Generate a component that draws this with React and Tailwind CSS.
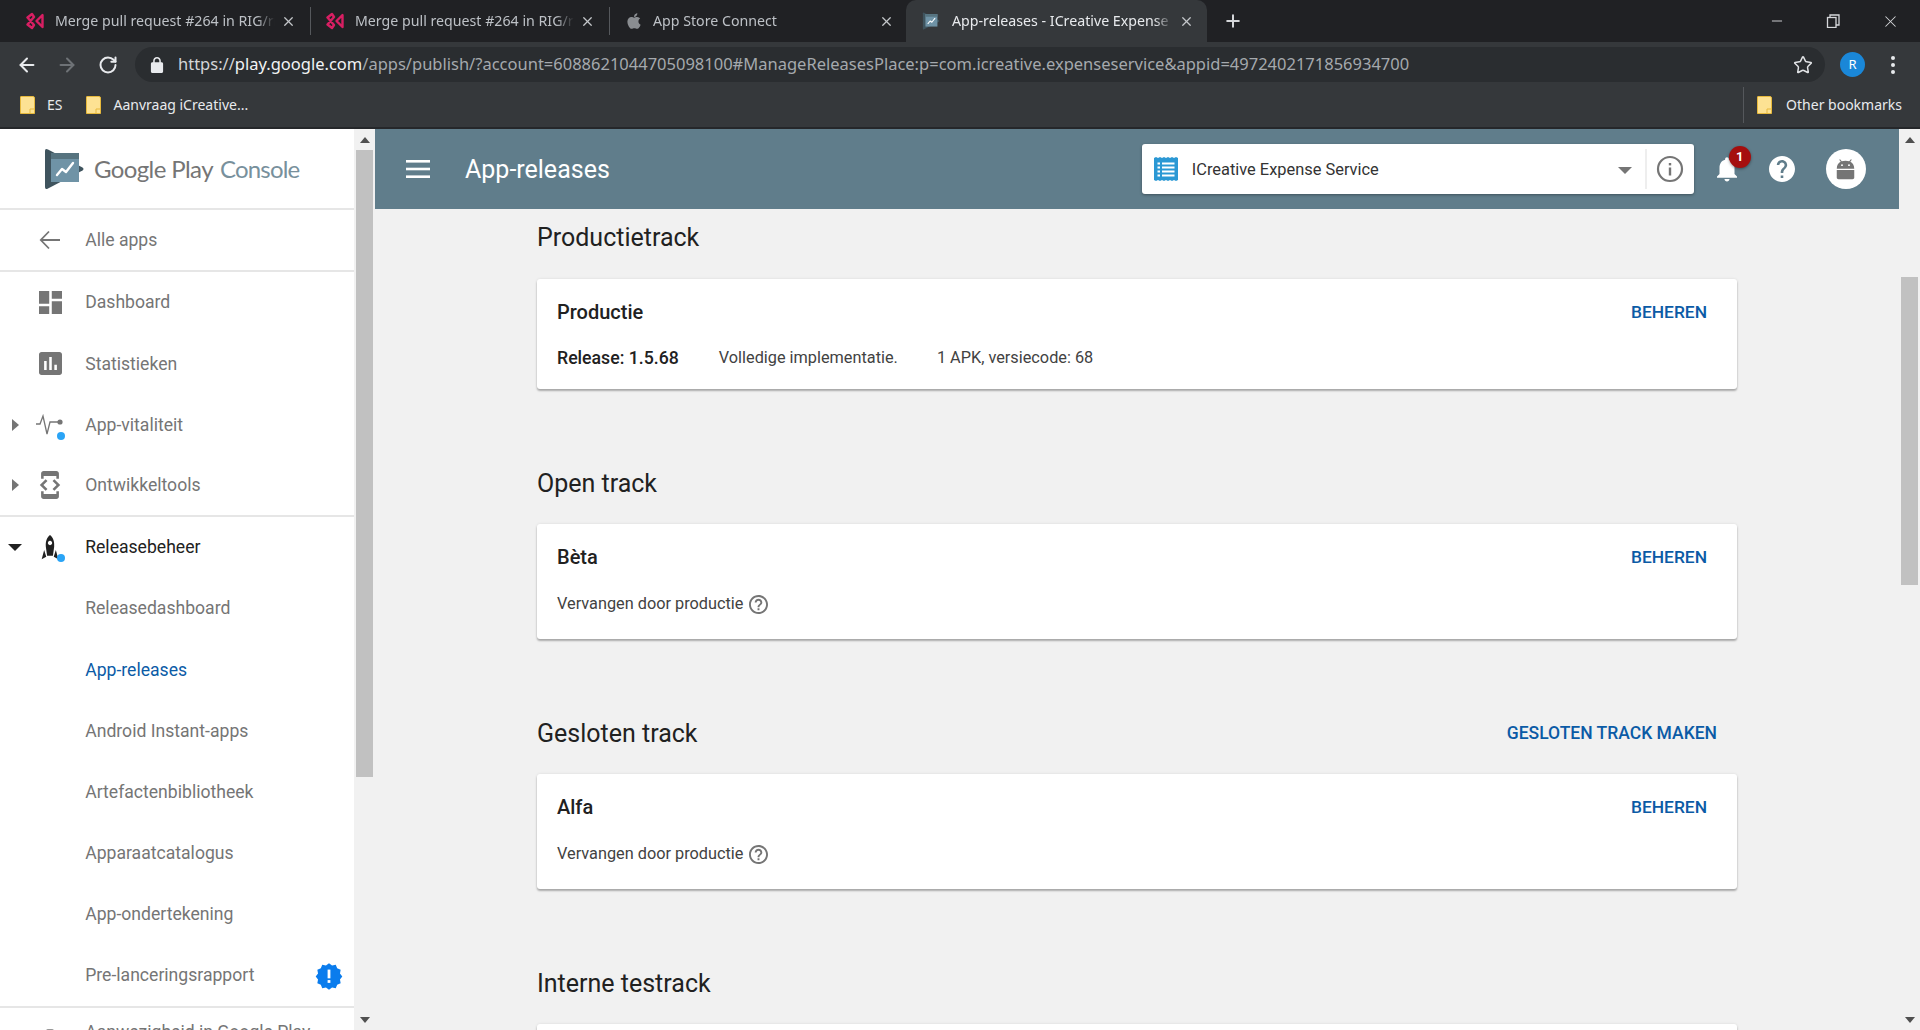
import { ArrowLeft, ArrowRight, RotateCw, Star, X, Plus, Minus } from 'lucide-react'
import { FaApple } from 'react-icons/fa'

const chromeFont = "[font-family:'Noto_Sans',sans-serif]"

function PinkIcon() {
  return (
    <svg width="18" height="18" viewBox="0 0 18 18" fill="none" stroke="#d81f63" strokeWidth="2.4" strokeLinejoin="round" className="shrink-0">
      <path d="M6 2 L1.5 5.5 L8 13 L6 16 L1.5 12.5 L8 5 Z" />
      <path d="M10.5 9 L16.5 3 V15 Z" />
    </svg>
  )
}

function PlayIcon({ className }) {
  return (
    <svg viewBox="0 0 40 42" className={className}>
      <path d="M1 3 Q1 0 4 1.5 L38.5 19.5 Q40.5 21 38.5 22.5 L4 40.5 Q1 42 1 39 Z" fill="#3f545e" />
      <rect x="7" y="5" width="28" height="29" fill="#6f93a6" />
      <rect x="7" y="5" width="28" height="6" fill="#56737f" />
      <path d="M13 27 L18 21 L22 24 L29 15" fill="none" stroke="#fff" strokeWidth="2.4" strokeLinecap="round" strokeLinejoin="round" />
    </svg>
  )
}

function Tab({ width, paddingClass, icon, label, active, closeClass }) {
  return (
    <div
      className={`flex h-[42px] shrink-0 items-center ${paddingClass} ${active ? 'rounded-t-[10px] bg-[#35383b]' : ''}`}
      style={{ width }}
    >
      {icon}
      <span className={`min-w-0 flex-1 overflow-hidden whitespace-nowrap text-[14.2px] ${active ? 'text-[#e8eaed]' : 'text-[#bdc1c6]'} [mask-image:linear-gradient(to_right,black_92%,transparent)]`}>
        {label}
      </span>
      <X size={15} strokeWidth={2} className={`shrink-0 text-[#c4c7ca] ${closeClass}`} />
    </div>
  )
}

function Folder() {
  return (
    <svg width="15" height="18" viewBox="0 0 15 18" className="shrink-0">
      <path d="M0.5 1 Q0.5 0.5 1 0.5 H13 Q14.5 0.5 14.5 2 V17.5 H0.5 Z" fill="#fde293" stroke="#e7b93c" strokeWidth="1" />
      <path d="M10 17 V13 H14" fill="none" stroke="#e7b93c" strokeWidth="1" />
    </svg>
  )
}

function BrowserChrome() {
  return (
    <div className={`shrink-0 ${chromeFont}`}>
      <div className="flex h-[42px] items-center bg-[#202124]">
        <Tab width={310} paddingClass="pl-[26px] pr-[14px]" icon={<PinkIcon />} label={<span className="ml-[11px]">Merge pull request #264 in RIG/rig</span>} closeClass="ml-[6px]" />
        <div className="h-[28px] w-px bg-[#55585c]" />
        <Tab width={298} paddingClass="pl-[15px] pr-[14px]" icon={<PinkIcon />} label={<span className="ml-[11px]">Merge pull request #264 in RIG/rig</span>} closeClass="ml-[6px]" />
        <div className="h-[28px] w-px bg-[#55585c]" />
        <Tab width={296} paddingClass="pl-[15px] pr-[12px]" icon={<FaApple size={18} className="shrink-0 text-[#8a8d91]" />} label={<span className="ml-[10px]">App Store Connect</span>} />
        <Tab width={301} paddingClass="pl-[16px] pr-[13px]" active icon={<PlayIcon className="h-[18px] w-[18px] shrink-0" />} label={<span className="ml-[12px]">App-releases - ICreative Expense Service</span>} closeClass="ml-[6px]" />
        <Plus size={20} strokeWidth={2.4} className="ml-[16px] text-[#d5d7da]" />
        <div className="ml-auto flex items-center pr-[20px] text-[#d5d7da]">
          <Minus size={16} strokeWidth={1.4} />
          <svg width="14" height="14" viewBox="0 0 14 14" fill="none" stroke="currentColor" strokeWidth="1.3" className="ml-[41px]">
            <rect x="1.5" y="3.5" width="8.5" height="10" />
            <path d="M4 3.5 V1 H13 V11 H10" />
          </svg>
          <X size={19} strokeWidth={1.3} className="ml-[41px]" />
        </div>
      </div>

      <div className="flex h-[40px] items-end bg-[#35383b] pl-[16px] pr-[24px]">
        <div className="flex h-[35px] w-full items-center">
          <ArrowLeft size={22} strokeWidth={2.2} className="text-[#e8eaed]" />
          <ArrowRight size={22} strokeWidth={2.2} className="ml-[18px] text-[#6e7276]" />
          <RotateCw size={20} strokeWidth={2.4} className="ml-[20px] text-[#e8eaed]" />
          <div className="ml-[17px] flex h-[35px] w-[1690px] items-center rounded-full bg-[#2a2d30] pl-[15px] pr-[12px]">
            <svg width="14" height="16" viewBox="4 1 16 21" fill="#e8eaed" className="shrink-0">
              <path d="M18 8h-1V6c0-2.76-2.24-5-5-5S7 3.24 7 6v2H6c-1.1 0-2 .9-2 2v10c0 1.1.9 2 2 2h12c1.1 0 2-.9 2-2V10c0-1.1-.9-2-2-2zM9 6c0-1.66 1.34-3 3-3s3 1.34 3 3v2H9V6z" />
            </svg>
            <span className="ml-[14px] whitespace-nowrap text-[16.5px] text-[#a5a9ad]">
              <span className="text-[#d3d5d8]">https://</span>
              <span className="text-[#f1f3f4]">play.google.com</span>
              /apps/publish/?account=6088621044705098100#ManageReleasesPlace:p=com.icreative.expenseservice&amp;appid=4972402171856934700
            </span>
            <Star size={20} strokeWidth={1.8} className="ml-auto text-[#e0e2e5]" />
          </div>
          <div className="ml-[15px] flex h-[25px] w-[25px] items-center justify-center rounded-full bg-[#1a87d8] text-[13px] text-white">R</div>
          <svg width="4" height="18" viewBox="0 0 4 18" fill="#e8eaed" className="ml-[26px]">
            <circle cx="2" cy="2" r="2" />
            <circle cx="2" cy="9" r="2" />
            <circle cx="2" cy="16" r="2" />
          </svg>
        </div>
      </div>

      <div className="flex h-[47px] items-center border-b-2 border-[#25272a] bg-[#35383b] pl-[20px] pr-[18px] text-[14px] text-[#e8eaed]">
        <Folder />
        <span className="ml-[12px]">ES</span>
        <div className="ml-[24px]"><Folder /></div>
        <span className="ml-[12px]">Aanvraag iCreative...</span>
        <div className="ml-auto h-[36px] w-px bg-[#55585c]" />
        <div className="ml-[13px]"><Folder /></div>
        <span className="ml-[14px]">Other bookmarks</span>
      </div>
    </div>
  )
}

const icons = {
  back: (
    <svg width="24" height="24" viewBox="0 0 24 24" fill="none" stroke="#757575" strokeWidth="1.8">
      <path d="M22 12 H3 M11 3.5 L2.8 12 L11 20.5" />
    </svg>
  ),
  dashboard: (
    <svg width="23" height="23" viewBox="3 3 18 18" fill="#757575">
      <path d="M3 13h8V3H3v10zm0 8h8v-6H3v6zm10 0h8V11h-8v10zm0-18v6h8V3h-8z" />
    </svg>
  ),
  stats: (
    <svg width="23" height="23" viewBox="3 3 18 18" fill="#757575">
      <path d="M19 3H5c-1.1 0-2 .9-2 2v14c0 1.1.9 2 2 2h14c1.1 0 2-.9 2-2V5c0-1.1-.9-2-2-2zM9 17H7v-7h2v7zm4 0h-2V7h2v10zm4 0h-2v-4h2v4z" />
    </svg>
  ),
  vitals: (
    <svg width="28" height="22" viewBox="0 0 28 22" fill="none" stroke="#757575" strokeWidth="1.3">
      <path d="M0 10 H4 L7 2 L11 20 L14 8 H23" />
      <circle cx="24" cy="8" r="2.6" fill="#757575" stroke="none" />
    </svg>
  ),
  devtools: (
    <svg width="28" height="28" viewBox="2 1 20 22" fill="#757575">
      <path d="M7 5h10v2h2V3c0-1.1-.9-1.99-2-1.99L7 1c-1.1 0-2 .9-2 2v4h2V5zm8.41 11.59L20 12l-4.59-4.59L14 8.83 17.17 12 14 15.17l1.41 1.42zM10 15.17L6.83 12 10 8.83 8.59 7.41 4 12l4.59 4.59L10 15.17zM17 19H7v-2H5v4c0 1.1.9 2 2 2h10c1.1 0 2-.9 2-2v-4h-2v2z" />
    </svg>
  ),
  rocket: (
    <svg width="20" height="25" viewBox="0 0 24 30" fill="#212121">
      <path fillRule="evenodd" d="M12 0 C8 3 6.5 8 7 14 L8.5 25 H15.5 L17 14 C17.5 8 16 3 12 0Z M12 7 a2.6 2.6 0 1 0 0.01 0Z" />
      <path d="M5 18 L2 29 L7.5 26Z M19 18 L22 29 L16.5 26Z" />
    </svg>
  ),
  store: (
    <svg width="26" height="26" viewBox="0 0 24 24" fill="#757575" className="mt-[17px]">
      <path d="M20 6h-4V4c0-1.1-.9-2-2-2h-4c-1.1 0-2 .9-2 2v2H4c-1.1 0-2 .9-2 2v11c0 1.1.9 2 2 2h16c1.1 0 2-.9 2-2V8c0-1.1-.9-2-2-2zM10 4h4v2h-4V4z" />
    </svg>
  ),
}

function NavRow({ icon, label, caret, dotClass, active, bordered, heightClass = 'h-[61.2px]' }) {
  return (
    <div className={`flex shrink-0 items-center ${heightClass} ${bordered ? 'border-b-2 border-[#e6e6e6]' : ''}`}>
      <div className="flex w-[30px] justify-center">
        {caret === 'right' && <div className="h-0 w-0 border-y-[6px] border-l-[7px] border-y-transparent border-l-[#757575]" />}
        {caret === 'down' && <div className="h-0 w-0 border-x-[7px] border-t-[7px] border-x-transparent border-t-[#212121]" />}
      </div>
      <div className="relative flex w-[40px] justify-center">
        {icon}
        {dotClass && <span className={`absolute right-[5px] h-[8px] w-[8px] rounded-full bg-[#2aa4f6] ${dotClass}`} />}
      </div>
      <span className={`ml-[15.2px] whitespace-nowrap text-[17.6px] ${active ? 'text-[#212121]' : 'text-[#757575]'}`}>{label}</span>
    </div>
  )
}

function SubRow({ label, active, badge }) {
  return (
    <div className="flex h-[61.2px] shrink-0 items-center pl-[85.2px]">
      <span className={`text-[17.6px] ${active ? 'text-[#0b5ba6]' : 'text-[#757575]'}`}>{label}</span>
      {badge && (
        <svg width="28" height="28" viewBox="0 0 24 24" className="ml-auto mr-[11px]">
          <path fill="#0a7ced" d="M12 1l2.6 2 3.2-.6 1.2 3 3 1.2-.6 3.2 2 2.6-2 2.6.6 3.2-3 1.2-1.2 3-3.2-.6-2.6 2-2.6-2-3.2.6-1.2-3-3-1.2.6-3.2-2-2.6 2-2.6-.6-3.2 3-1.2 1.2-3 3.2.6z" />
          <rect x="10.8" y="6.5" width="2.4" height="7.5" fill="#fff" />
          <rect x="10.8" y="15.5" width="2.4" height="2.4" fill="#fff" />
        </svg>
      )}
    </div>
  )
}

function Sidebar() {
  return (
    <div className="flex h-full w-[354px] shrink-0 flex-col overflow-hidden bg-white">
      <div className="flex h-[81px] shrink-0 items-center border-b-2 border-[#e6e6e6] pl-[44px]">
        <PlayIcon className="h-[42px] w-[40px] shrink-0" />
        <span className="ml-[10px] whitespace-nowrap text-[24px] tracking-[-0.6px] text-[#757575] [font-family:Lato,sans-serif]">Google Play</span>
        <span className="ml-[7px] whitespace-nowrap text-[24px] tracking-[-0.8px] text-[#78909c] [font-family:Lato,sans-serif]">Console</span>
      </div>
      <NavRow icon={icons.back} label="Alle apps" bordered heightClass="h-[62px]" />
      <NavRow icon={icons.dashboard} label="Dashboard" />
      <NavRow icon={icons.stats} label="Statistieken" />
      <NavRow icon={icons.vitals} label="App-vitaliteit" caret="right" dotClass="bottom-[-4px]" />
      <NavRow icon={icons.devtools} label="Ontwikkeltools" caret="right" bordered />
      <NavRow icon={icons.rocket} label="Releasebeheer" caret="down" dotClass="bottom-[-2px]" active />
      <SubRow label="Releasedashboard" />
      <SubRow label="App-releases" active />
      <SubRow label="Android Instant-apps" />
      <SubRow label="Artefactenbibliotheek" />
      <SubRow label="Apparaatcatalogus" />
      <SubRow label="App-ondertekening" />
      <div className="shrink-0 border-b-2 border-[#e6e6e6]">
        <SubRow label="Pre-lanceringsrapport" badge />
      </div>
      <NavRow icon={icons.store} label="Aanwezigheid in Google Play" heightClass="h-[47px]" />
    </div>
  )
}

function Scrollbar({ thumbTop, thumbHeight }) {
  return (
    <div className="flex h-full w-[21px] shrink-0 flex-col bg-[#f1f1f1]">
      <div className="flex h-[21px] shrink-0 items-center justify-center">
        <div className="h-0 w-0 border-x-[5px] border-b-[6px] border-x-transparent border-b-[#505050]" />
      </div>
      <div className="ml-[2px] w-[17px] shrink-0 bg-[#c1c1c1]" style={{ marginTop: thumbTop, height: thumbHeight }} />
      <div className="mt-auto flex h-[21px] shrink-0 items-center justify-center">
        <div className="h-0 w-0 border-x-[5px] border-t-[6px] border-x-transparent border-t-[#505050]" />
      </div>
    </div>
  )
}

function Header() {
  return (
    <div className="flex h-[80px] shrink-0 items-center bg-[#607d8b] pl-[31px]">
      <svg width="24" height="18" viewBox="0 0 24 18" fill="#fff">
        <rect y="0" width="24" height="2.6" />
        <rect y="7.7" width="24" height="2.6" />
        <rect y="15.4" width="24" height="2.6" />
      </svg>
      <span className="ml-[35px] mt-px text-[25px] text-white">App-releases</span>

      <div className="ml-[532px] flex h-[50px] w-[552px] items-center rounded-[3px] bg-white pl-[12px] shadow-[0_1px_3px_rgba(0,0,0,0.35)]">
        <svg width="24" height="24" viewBox="0 0 24 24" className="shrink-0">
          <path fill="#2b98d4" d="M0 1 L2 0 L4 1 L6 0 L8 1 L10 0 L12 1 L14 0 L16 1 L18 0 L20 1 L22 0 L24 1 V23 L22 24 L20 23 L18 24 L16 23 L14 24 L12 23 L10 24 L8 23 L6 24 L4 23 L2 24 L0 23 Z" />
          <path fill="#fff" d="M3.5 5.5 h2.5 v2 h-2.5z M8 5.5 h12.5 v2 H8z M3.5 9.5 h2.5 v2 h-2.5z M8 9.5 h12.5 v2 H8z M3.5 13.5 h2.5 v2 h-2.5z M8 13.5 h12.5 v2 H8z M3.5 17.5 h2.5 v2 h-2.5z M8 17.5 h12.5 v2 H8z" />
        </svg>
        <span className="ml-[14px] mt-[3px] text-[16.4px] text-[#333333]">ICreative Expense Service</span>
        <div className="ml-auto mt-[3px] h-0 w-0 border-x-[7px] border-t-[7px] border-x-transparent border-t-[#757575]" />
        <div className="ml-[13px] h-[40px] w-[2px] bg-[#eeeeee]" />
        <svg width="28" height="28" viewBox="0 0 28 28" fill="none" className="ml-[9px] mr-[10px] shrink-0">
          <circle cx="14" cy="14" r="12" stroke="#757575" strokeWidth="2.2" />
          <rect x="12.8" y="12.5" width="2.4" height="8" fill="#757575" />
          <rect x="12.8" y="8" width="2.4" height="2.4" fill="#757575" />
        </svg>
      </div>

      <div className="relative ml-[18px] flex w-[30px] justify-center">
        <svg width="30" height="30" viewBox="0 0 24 24" fill="#fff">
          <path d="M12 22c1.1 0 2-.9 2-2h-4c0 1.1.9 2 2 2zm6-6v-5c0-3.07-1.63-5.64-4.5-6.32V4c0-.83-.67-1.5-1.5-1.5s-1.5.67-1.5 1.5v.68C7.64 5.36 6 7.92 6 11v5l-2 2v1h16v-1l-2-2z" />
        </svg>
        <span className="absolute left-[17px] top-[-8px] flex h-[22px] w-[22px] items-center justify-center rounded-full bg-[#a50e0e] text-[13px] font-bold text-white shadow-[0_1px_3px_rgba(0,0,0,0.4)]">1</span>
      </div>

      <svg width="26" height="26" viewBox="2 2 20 20" fill="#fff" className="ml-[27px]">
        <path d="M12 2C6.48 2 2 6.48 2 12s4.48 10 10 10 10-4.48 10-10S17.52 2 12 2zm1 17h-2v-2h2v2zm2.07-7.75l-.9.92C13.45 12.9 13 13.5 13 15h-2v-.5c0-1.1.45-2.1 1.17-2.83l1.24-1.26c.37-.36.59-.86.59-1.41 0-1.1-.9-2-2-2s-2 .9-2 2H8c0-2.21 1.79-4 4-4s4 1.79 4 4c0 .88-.36 1.68-.93 2.25z" />
      </svg>

      <div className="ml-[31px] flex h-[40px] w-[40px] items-center justify-center rounded-full bg-white">
        <svg width="21" height="21" viewBox="0 0 24 24" fill="#757575">
          <path d="M2 11 C2 7 4 4.5 6.5 3.2 L4.8 0.8 L5.8 0.2 L7.7 2.7 C9 2.2 10.4 2 12 2 C13.6 2 15 2.2 16.3 2.7 L18.2 0.2 L19.2 0.8 L17.5 3.2 C20 4.5 22 7 22 11 Z" />
          <path d="M2 12.5 H22 V21 C22 22.1 21.1 23 20 23 H4 C2.9 23 2 22.1 2 21 Z" />
          <circle cx="8" cy="7" r="1.1" fill="#fff" />
          <circle cx="16" cy="7" r="1.1" fill="#fff" />
        </svg>
      </div>
    </div>
  )
}

function HelpOutline() {
  return (
    <svg width="19" height="19" viewBox="2 2 20 20" fill="#757575" className="ml-[6px] shrink-0">
      <path d="M11 18h2v-2h-2v2zm1-16C6.48 2 2 6.48 2 12s4.48 10 10 10 10-4.48 10-10S17.52 2 12 2zm0 18c-4.41 0-8-3.59-8-8s3.59-8 8-8 8 3.59 8 8-3.59 8-8 8zm0-14c-2.21 0-4 1.79-4 4h2c0-1.1.9-2 2-2s2 .9 2 2c0 2-3 1.75-3 5h2c0-2.25 3-2.5 3-5 0-2.21-1.79-4-4-4z" />
    </svg>
  )
}

function ReplacedLine() {
  return (
    <div className="mt-[17px] flex h-[30px] items-center text-[16.3px] text-[#424242]">
      Vervangen door productie
      <HelpOutline />
    </div>
  )
}

function Track({ title, action, className, children }) {
  return (
    <section className={`w-[1200px] ${className}`}>
      <div className="flex h-[32px] items-center justify-between">
        <h2 className="mt-px text-[25px] font-normal text-[#212121]">{title}</h2>
        {action && <span className="mr-[20px] text-[17.5px] font-medium uppercase text-[#0b5ba6]">{action}</span>}
      </div>
      {children}
    </section>
  )
}

function Card({ name, children, className }) {
  return (
    <div className={`rounded-[3px] bg-white pl-[20px] pr-[30px] pt-[18px] shadow-[0_2px_2px_rgba(0,0,0,0.28),0_0_3px_rgba(0,0,0,0.1)] ${className}`}>
      <div className="flex h-[30px] items-center justify-between">
        <span className="text-[20px] font-medium text-[#212121]">{name}</span>
        <span className="text-[17.4px] font-medium uppercase text-[#0b5ba6]">Beheren</span>
      </div>
      {children}
    </div>
  )
}

export default function App() {
  return (
    <div className="flex h-[1030px] w-[1920px] flex-col overflow-hidden bg-[#f1f1f1] [font-family:Roboto,sans-serif]">
      <BrowserChrome />
      <div className="flex min-h-0 flex-1">
        <Sidebar />
        <Scrollbar thumbTop={0} thumbHeight={627} />
        <div className="flex min-w-0 flex-1 flex-col overflow-hidden">
          <Header />
          <div className="min-h-0 flex-1 overflow-hidden pl-[162px] pt-[12px]">
            <Track title="Productietrack">
              <Card name="Productie" className="mt-[26px] h-[110px]">
                <div className="mt-[16px] flex h-[30px] items-center text-[16.3px] text-[#424242]">
                  <span className="text-[17.7px] font-medium text-[#212121]">Release: 1.5.68</span>
                  <span className="ml-[40px]">Volledige implementatie.</span>
                  <span className="ml-[39px]">1 APK, versiecode: 68</span>
                </div>
              </Card>
            </Track>
            <Track title="Open track" className="mt-[78px]">
              <Card name="Bèta" className="mt-[25px] h-[115px]">
                <ReplacedLine />
              </Card>
            </Track>
            <Track title="Gesloten track" action="Gesloten track maken" className="mt-[78px]">
              <Card name="Alfa" className="mt-[25px] h-[115px]">
                <ReplacedLine />
              </Card>
            </Track>
            <Track title="Interne testrack" className="mt-[78px]">
              <Card name="Intern" className="mt-[25px] h-[115px]" />
            </Track>
          </div>
        </div>
        <Scrollbar thumbTop={127} thumbHeight={308} />
      </div>
    </div>
  )
}
